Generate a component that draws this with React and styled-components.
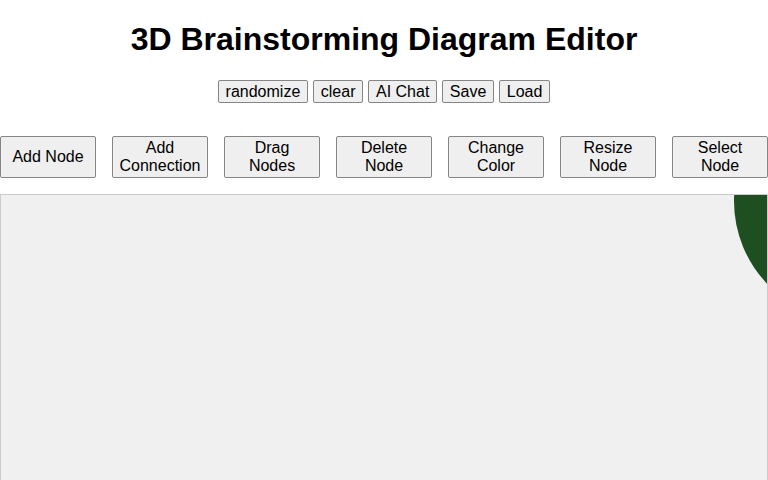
import styled, { createGlobalStyle } from "styled-components";

const GlobalStyle = createGlobalStyle`
	body {
		margin: 0;
		font-family: "Liberation Sans", Arial, sans-serif;
		background: #fff;
	}
`;

const tools = [
	"Add Node",
	"Add Connection",
	"Drag Nodes",
	"Delete Node",
	"Change Color",
	"Resize Node",
	"Select Node",
];

const nodes = [{ id: 1, x: 853, y: 6, r: 120, color: "#1e4f20" }];

const App = () => {
	return (
		<Wrapper>
			<GlobalStyle />
			<Title>3D Brainstorming Diagram Editor</Title>
			<Controls>
				<Button>randomize</Button>
				<Button>clear</Button>
				<Button>AI Chat</Button>
				<Button>Save</Button>
				<Button>Load</Button>
			</Controls>
			<Toolbar>
				{tools.map((t) => (
					<ToolButton key={t}>{t}</ToolButton>
				))}
			</Toolbar>
			<Canvas>
				{nodes.map((n) => (
					<Node
						key={n.id}
						$color={n.color}
						style={{
							left: n.x - n.r,
							top: n.y - n.r,
							width: n.r * 2,
							height: n.r * 2,
						}}
					/>
				))}
			</Canvas>
		</Wrapper>
	);
};
export default App;

const Wrapper = styled.div`
	width: 768px;
	height: 480px;
	overflow: hidden;
`;

const Title = styled.h1`
	font-size: 32px;
	font-weight: bold;
	text-align: center;
	margin: 21px 0 22px;
	line-height: 37px;
`;

const Controls = styled.div`
	display: flex;
	justify-content: center;
	gap: 5.5px;
`;

const Button = styled.button`
	font-family: "Liberation Sans", Arial, sans-serif;
	font-size: 16px;
	line-height: 19px;
	height: 23px;
	padding: 1px 6.5px;
	background: #efefef;
	border: 1px solid #858585;
	border-radius: 2px;
	color: #000;
	cursor: pointer;
`;

const Toolbar = styled.div`
	display: flex;
	justify-content: space-between;
	margin-top: 33px;
`;

const ToolButton = styled(Button)`
	width: 96px;
	height: 42px;
	padding: 2px 6px;
	line-height: 18px;
`;

const Canvas = styled.div`
	position: relative;
	margin-top: 16px;
	height: 600px;
	background: #f0f0f0;
	border: 1px solid #ccc;
	overflow: hidden;
`;

const Node = styled.div`
	position: absolute;
	border-radius: 50%;
	background: ${(p) => p.$color};
`;
